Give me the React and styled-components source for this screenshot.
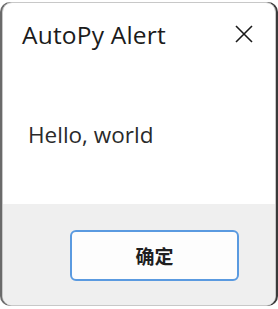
import React from 'react'
import styled, { createGlobalStyle } from 'styled-components'

const Global = createGlobalStyle`
    html, body {
        margin: 0;
        padding: 0;
        background: #ffffff;
    }
    body {
        width: 278px;
        height: 309px;
        overflow: hidden;
    }
`;

function App() {
    return (
        <>
            <Global />
            <Screen>
                <Window>
                    <TitleBar>
                        <Title>AutoPy Alert</Title>
                        <CloseButton aria-label="close">
                            <svg width="20" height="20" viewBox="0 0 20 20">
                                <path d="M2 2 L18 18 M18 2 L2 18" stroke="#1a1a1a" strokeWidth="1.6" fill="none" />
                            </svg>
                        </CloseButton>
                    </TitleBar>
                    <Body>
                        <Message>Hello, world</Message>
                    </Body>
                    <Footer>
                        <OkButton>确定</OkButton>
                    </Footer>
                </Window>
            </Screen>
        </>
    )
}

const Screen = styled.div`
    width: 278px;
    height: 309px;
    padding: 2px 2px 3px 2px;
    box-sizing: border-box;
    display: flex;
`;

const Window = styled.div`
    flex: 1;
    display: flex;
    flex-direction: column;
    background: #ffffff;
    border: 1px solid #c8c8c8;
    border-radius: 10px;
    overflow: hidden;
    box-shadow: -2px 0 0 #6a6a6a, 2px 0 0 #3a3a3a;
    font-family: "Open Sans", "Noto Sans", "Noto Sans CJK SC", sans-serif;
`;

const TitleBar = styled.div`
    height: 62px;
    display: flex;
    align-items: center;
    justify-content: space-between;
    padding: 0 21px 0 19px;
`;

const Title = styled.div`
    font-size: 24.5px;
    color: #1b1b1b;
    letter-spacing: 0.2px;
`;

const CloseButton = styled.div`
    width: 20px;
    height: 20px;
    display: flex;
`;

const Body = styled.div`
    height: 139px;
    padding: 54px 0 0 25px;
    box-sizing: border-box;
`;

const Message = styled.div`
    font-size: 22.5px;
    color: #2a2a2a;
`;

const Footer = styled.div`
    flex: 1;
    background: #efefef;
    display: flex;
    justify-content: flex-end;
    padding: 26px 36px 0 0;
    box-sizing: border-box;
`;

const OkButton = styled.div`
    width: 169px;
    height: 51px;
    box-sizing: border-box;
    border: 2px solid #5a9ae0;
    border-radius: 6px;
    background: #fdfdfd;
    display: flex;
    align-items: center;
    justify-content: center;
    font-family: "Noto Sans CJK SC", sans-serif;
    font-size: 19px;
    font-weight: 700;
    color: #1f1f1f;
`;

export default App
